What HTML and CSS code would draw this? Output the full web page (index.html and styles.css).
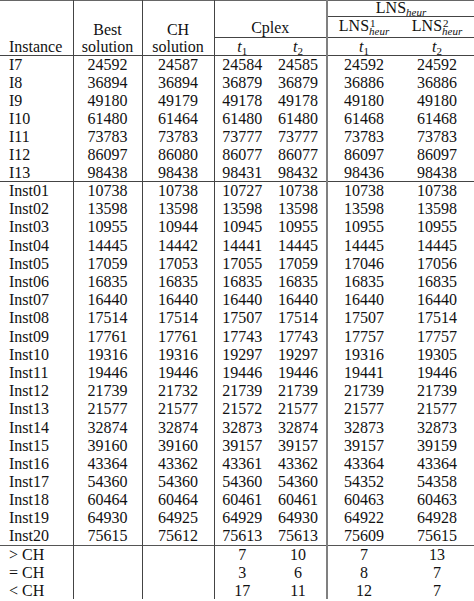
FILE: index.html
```html
<!DOCTYPE html>
<html>
<head>
<meta charset="utf-8">
<link rel="stylesheet" href="styles.css">
</head>
<body>
<table class="tbl">
<colgroup>
<col class="c-inst"><col class="c-best"><col class="c-ch"><col class="c-cp1"><col class="c-cp2"><col class="c-l1"><col class="c-l2">
</colgroup>
<thead>
<tr class="h1">
<th rowspan="3" class="inst vr">Instance</th>
<th rowspan="3" class="vr">Best<br>solution</th>
<th rowspan="3" class="vr">CH<br>solution</th>
<th rowspan="2" colspan="2" class="cplex vr2">Cplex</th>
<th colspan="2" class="lns">LNS<sub class="it">heur</sub></th>
</tr>
<tr class="h2">
<th class="lnsx">LNS<span class="ss"><span class="sp">1</span><span class="sb it">heur</span></span></th>
<th class="lnsx">LNS<span class="ss"><span class="sp">2</span><span class="sb it">heur</span></span></th>
</tr>
<tr class="h3">
<th class="tt"><i>t</i><sub>1</sub></th>
<th class="tt vr2"><i>t</i><sub>2</sub></th>
<th class="tt"><i>t</i><sub>1</sub></th>
<th class="tt"><i>t</i><sub>2</sub></th>
</tr>
</thead>
<tbody class="g1">
<tr><td>I7</td><td>24592</td><td>24587</td><td>24584</td><td>24585</td><td>24592</td><td>24592</td></tr>
<tr><td>I8</td><td>36894</td><td>36894</td><td>36879</td><td>36879</td><td>36886</td><td>36886</td></tr>
<tr><td>I9</td><td>49180</td><td>49179</td><td>49178</td><td>49178</td><td>49180</td><td>49180</td></tr>
<tr><td>I10</td><td>61480</td><td>61464</td><td>61480</td><td>61480</td><td>61468</td><td>61468</td></tr>
<tr><td>I11</td><td>73783</td><td>73783</td><td>73777</td><td>73777</td><td>73783</td><td>73783</td></tr>
<tr><td>I12</td><td>86097</td><td>86080</td><td>86077</td><td>86077</td><td>86097</td><td>86097</td></tr>
<tr><td>I13</td><td>98438</td><td>98438</td><td>98431</td><td>98432</td><td>98436</td><td>98438</td></tr>
</tbody>
<tbody class="g2">
<tr><td>Inst01</td><td>10738</td><td>10738</td><td>10727</td><td>10738</td><td>10738</td><td>10738</td></tr>
<tr><td>Inst02</td><td>13598</td><td>13598</td><td>13598</td><td>13598</td><td>13598</td><td>13598</td></tr>
<tr><td>Inst03</td><td>10955</td><td>10944</td><td>10945</td><td>10955</td><td>10955</td><td>10955</td></tr>
<tr><td>Inst04</td><td>14445</td><td>14442</td><td>14441</td><td>14445</td><td>14445</td><td>14445</td></tr>
<tr><td>Inst05</td><td>17059</td><td>17053</td><td>17055</td><td>17059</td><td>17046</td><td>17056</td></tr>
<tr><td>Inst06</td><td>16835</td><td>16835</td><td>16835</td><td>16835</td><td>16835</td><td>16835</td></tr>
<tr><td>Inst07</td><td>16440</td><td>16440</td><td>16440</td><td>16440</td><td>16440</td><td>16440</td></tr>
<tr><td>Inst08</td><td>17514</td><td>17514</td><td>17507</td><td>17514</td><td>17507</td><td>17514</td></tr>
<tr><td>Inst09</td><td>17761</td><td>17761</td><td>17743</td><td>17743</td><td>17757</td><td>17757</td></tr>
<tr><td>Inst10</td><td>19316</td><td>19316</td><td>19297</td><td>19297</td><td>19316</td><td>19305</td></tr>
<tr><td>Inst11</td><td>19446</td><td>19446</td><td>19446</td><td>19446</td><td>19441</td><td>19446</td></tr>
<tr><td>Inst12</td><td>21739</td><td>21732</td><td>21739</td><td>21739</td><td>21739</td><td>21739</td></tr>
<tr><td>Inst13</td><td>21577</td><td>21577</td><td>21572</td><td>21577</td><td>21577</td><td>21577</td></tr>
<tr><td>Inst14</td><td>32874</td><td>32874</td><td>32873</td><td>32874</td><td>32873</td><td>32873</td></tr>
<tr><td>Inst15</td><td>39160</td><td>39160</td><td>39157</td><td>39157</td><td>39157</td><td>39159</td></tr>
<tr><td>Inst16</td><td>43364</td><td>43362</td><td>43361</td><td>43362</td><td>43364</td><td>43364</td></tr>
<tr><td>Inst17</td><td>54360</td><td>54360</td><td>54360</td><td>54360</td><td>54352</td><td>54358</td></tr>
<tr><td>Inst18</td><td>60464</td><td>60464</td><td>60461</td><td>60461</td><td>60463</td><td>60463</td></tr>
<tr><td>Inst19</td><td>64930</td><td>64925</td><td>64929</td><td>64930</td><td>64922</td><td>64928</td></tr>
<tr><td>Inst20</td><td>75615</td><td>75612</td><td>75613</td><td>75613</td><td>75609</td><td>75615</td></tr>
</tbody>
<tbody class="g3">
<tr><td>&gt; CH</td><td></td><td></td><td>7</td><td>10</td><td>7</td><td>13</td></tr>
<tr><td>= CH</td><td></td><td></td><td>3</td><td>6</td><td>8</td><td>7</td></tr>
<tr><td>&lt; CH</td><td></td><td></td><td>17</td><td>11</td><td>12</td><td>7</td></tr>
</tbody>
</table>
</body>
</html>
```
FILE: styles.css
```css
html, body {
  margin: 0;
  padding: 0;
  background: #ffffff;
}
body {
  font-family: "Liberation Serif", "Times New Roman", serif;
  font-size: 16px;
  color: #111111;
}
.tbl {
  width: 474px;
  table-layout: fixed;
  border-collapse: collapse;
  border-top: 1px solid #666666;
}
.c-inst { width: 73px; }
.c-best { width: 69px; }
.c-ch { width: 72px; }
.c-cp1 { width: 56px; }
.c-cp2 { width: 57px; }
.c-l1 { width: 73px; }
.c-l2 { width: 74px; }

th {
  font-weight: normal;
  padding: 0;
  text-align: center;
  vertical-align: bottom;
  line-height: 17px;
  white-space: nowrap;
}
td {
  padding: 0;
  text-align: center;
  line-height: 17px;
  white-space: nowrap;
}
td:first-child, th.inst {
  text-align: left;
  padding-left: 9px;
  border-right: 1px solid #444444;
}
td:nth-child(2), td:nth-child(3) {
  border-right: 1px solid #444444;
}
td:nth-child(5) {
  border-right: 2px solid #808080;
}
.vr { border-right: 1px solid #444444; }
.vr2 { border-right: 2px solid #808080; }

.h1 { height: 16px; }
.h2 { height: 21px; }
.h3 { height: 18px; }
.h1 th.lns {
  border-bottom: 1px solid #444444;
  vertical-align: top;
  line-height: 13px;
  height: 15px;
}
.cplex {
  border-bottom: 1px solid #444444;
  padding-bottom: 1px;
}
.lnsx {
  border-bottom: 1px solid #444444;
  line-height: 14px;
  height: 20px;
  vertical-align: middle;
}
.tt { line-height: 16px; }

thead { border-bottom: 1px solid #444444; }
.g1 tr { height: 18px; }
.g1 { border-bottom: 1px solid #444444; }
.g2 tr { height: 18.2px; }
.g2 { border-bottom: 1px solid #555555; }
.g3 tr { height: 18px; }

sub {
  font-size: 11px;
  vertical-align: -3px;
  line-height: 0;
}
.it { font-style: italic; }
.ss {
  display: inline-block;
  vertical-align: -4px;
  line-height: 8px;
  font-size: 11px;
  text-align: left;
}
.sp { display: block; margin-left: 1px; }
.sb { display: block; }
```
